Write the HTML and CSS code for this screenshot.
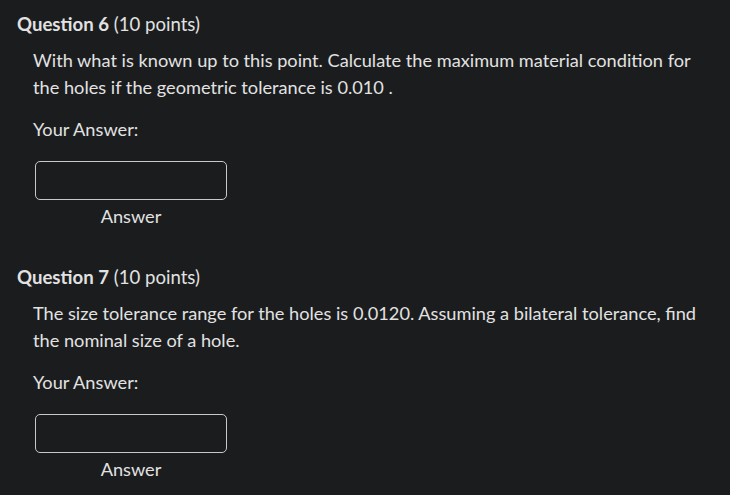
FILE: index.html
```html
<!DOCTYPE html>
<html lang="en">
<head>
<meta charset="utf-8">
<title>Quiz</title>
<link rel="stylesheet" href="styles.css">
</head>
<body>
<main class="quiz">
  <section class="question">
    <h2 class="question-title"><strong>Question 6</strong> (10 points)</h2>
    <div class="question-body">
      <p class="question-text">With what is known up to this point. Calculate the maximum material condition for the holes if the geometric tolerance is 0.010 .</p>
      <p class="answer-label">Your Answer:</p>
      <div class="answer-field">
        <input class="answer-input" type="text" aria-label="Answer">
        <span class="answer-caption">Answer</span>
      </div>
    </div>
  </section>
  <section class="question">
    <h2 class="question-title"><strong>Question 7</strong> (10 points)</h2>
    <div class="question-body">
      <p class="question-text">The size tolerance range for the holes is 0.0120. Assuming a bilateral tolerance, find the nominal size of a hole.</p>
      <p class="answer-label">Your Answer:</p>
      <div class="answer-field">
        <input class="answer-input" type="text" aria-label="Answer">
        <span class="answer-caption">Answer</span>
      </div>
    </div>
  </section>
</main>
</body>
</html>
```
FILE: styles.css
```css
html, body {
  margin: 0;
  padding: 0;
  background: #1b1c1e;
}
body {
  font-family: Lato, "Noto Sans", sans-serif;
  color: #e2e2e2;
  font-size: 18.2px;
}
.quiz {
  padding: 12px 0 0 17px;
}
.question {
  height: 253px;
}
.question-title {
  margin: 0;
  font-size: 18.6px;
  font-weight: 400;
  line-height: 24px;
}
.question-title strong {
  font-weight: 700;
}
.question-body {
  padding: 11px 0 0 16px;
}
.question-text {
  margin: 0;
  line-height: 27px;
  max-width: 685px;
}
.answer-label {
  margin: 15px 0 0;
  line-height: 27px;
}
.answer-field {
  display: flex;
  flex-direction: column;
  align-items: center;
  width: 192px;
  margin: 18px 0 0 2px;
}
.answer-input {
  box-sizing: border-box;
  width: 192px;
  height: 39px;
  margin: 0;
  border: 1px solid #c9c9c9;
  border-radius: 5px;
  background: #1b1c1e;
  color: #e2e2e2;
  font: inherit;
}
.answer-caption {
  margin-top: 5px;
  line-height: 22px;
}
```
